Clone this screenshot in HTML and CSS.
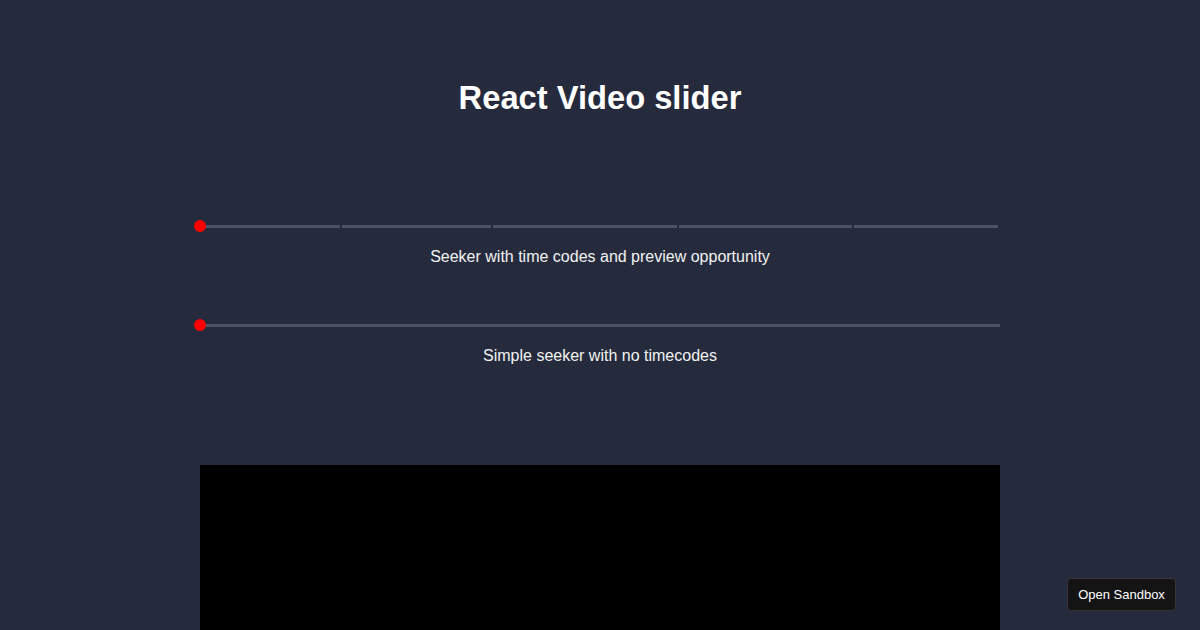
FILE: index.html
```html
<!DOCTYPE html>
<html>
<head>
<meta charset="utf-8">
<link rel="stylesheet" href="styles.css">
</head>
<body>
<main class="page">
  <h1 class="title">React Video slider</h1>
  <div class="seeker seeker-first">
    <div class="track">
      <div class="seg" style="width:140px"></div>
      <div class="seg" style="width:149px"></div>
      <div class="seg" style="width:184px"></div>
      <div class="seg" style="width:173px"></div>
      <div class="seg" style="width:144px"></div>
    </div>
    <div class="thumb"></div>
  </div>
  <p class="caption">Seeker with time codes and preview opportunity</p>
  <div class="seeker seeker-second">
    <div class="track">
      <div class="seg seg-full"></div>
    </div>
    <div class="thumb"></div>
  </div>
  <p class="caption">Simple seeker with no timecodes</p>
  <div class="video"></div>
</main>
<a class="sandbox">Open Sandbox</a>
</body>
</html>
```
FILE: styles.css
```css
html, body {
  margin: 0;
  padding: 0;
  background: #252b3d;
  height: 100%;
  overflow: hidden;
}
body {
  font-family: "Liberation Sans", Arial, sans-serif;
  color: #ffffff;
}
.page {
  width: 800px;
  margin: 0 auto;
  padding-top: 80px;
}
.title {
  margin: 0;
  font-size: 32.7px;
  line-height: 36px;
  font-weight: bold;
  text-align: center;
}
.seeker {
  position: relative;
  height: 13px;
}
.seeker-first { margin-top: 104px; }
.seeker-second { margin-top: 53px; }
.track {
  display: flex;
  padding-top: 5px;
}
.seg {
  height: 3px;
  background: #4d5266;
  margin-right: 2px;
}
.seg-full {
  flex: 1;
  margin-right: 0;
}
.thumb {
  position: absolute;
  left: -6px;
  top: 0;
  width: 12px;
  height: 12px;
  border-radius: 50%;
  background: #ff0000;
}
.caption {
  margin: 15px 0 0;
  font-size: 16px;
  line-height: 18px;
  text-align: center;
  color: #f2f2f2;
}
.video {
  margin-top: 100px;
  height: 165px;
  background: #000000;
}
.sandbox {
  position: fixed;
  right: 24px;
  bottom: 19px;
  width: 109px;
  height: 33px;
  box-sizing: border-box;
  display: flex;
  align-items: center;
  justify-content: center;
  background: #141414;
  border: 1px solid #3a3235;
  border-radius: 4px;
  font-size: 13px;
  color: #ffffff;
}
```
